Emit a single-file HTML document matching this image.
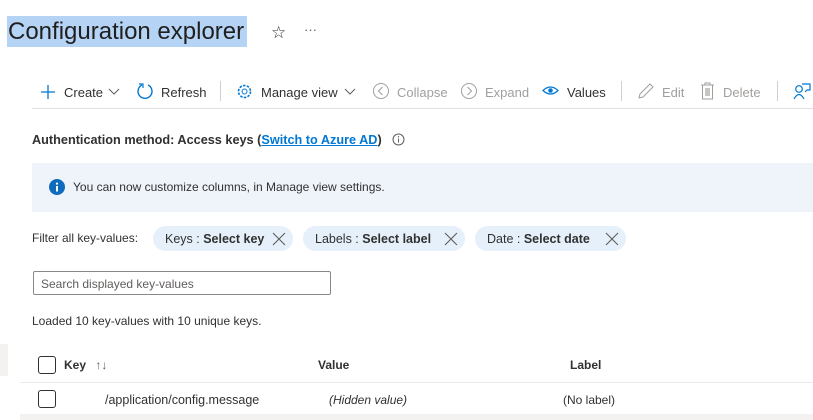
<!DOCTYPE html>
<html><head><style>
*{margin:0;padding:0;box-sizing:border-box}
body{width:813px;height:420px;overflow:hidden;background:#fff;font-family:"Liberation Sans",sans-serif;color:#323130;position:relative;font-size:13px}
.a{position:absolute;white-space:nowrap}
.tb{color:#323130;font-size:13px}
.dis{color:#a19f9d}
.chip{position:absolute;top:226px;height:25px;background:#e5f0fa;border-radius:13px;font-size:12.5px;line-height:26px;padding-left:12px}
.chip b{font-weight:bold}
.x{position:absolute;right:7px;top:6px}
.cb{position:absolute;width:18px;height:18px;border:1px solid #323130;border-radius:3px}
.sep{position:absolute;top:81px;width:1px;height:20px;background:#d2d0ce}
</style></head><body>
<div class="a" style="left:7px;top:16px;width:240px;height:31px;background:#b4d3f5"></div>
<div class="a" style="left:8px;top:17px;font-size:24px;color:#201f1e;line-height:30px">Configuration explorer</div>
<div class="a" style="left:271px;top:23px;font-size:17px;color:#323130">☆</div>
<div class="a" style="left:304px;top:22px;font-size:13px;color:#605e5c">···</div>

<svg class="a" style="left:40px;top:84px" width="16" height="16"><path d="M8 1v14M1 8h14" stroke="#0078d4" stroke-width="1.3"/></svg>
<div class="a tb" style="left:64px;top:85px">Create</div>
<svg class="a" style="left:108px;top:88px" width="12" height="8"><path d="M1 1l5 5 5-5" stroke="#605e5c" fill="none"/></svg>
<svg class="a" style="left:136px;top:82px" width="18" height="18"><path d="M6 3A7 7 0 1 0 12 3" stroke="#0078d4" stroke-width="1.4" fill="none"/><path d="M3 2h4v4" stroke="#0078d4" stroke-width="1.2" fill="none"/></svg>
<div class="a tb" style="left:161px;top:85px">Refresh</div>
<div class="sep" style="left:220px"></div>
<svg class="a" style="left:236px;top:83px" width="17" height="17"><circle cx="8.5" cy="8.5" r="6" stroke="#0078d4" stroke-width="1.6" fill="none" stroke-dasharray="2.5 1.3"/><circle cx="8.5" cy="8.5" r="2.5" stroke="#0078d4" fill="none"/></svg>
<div class="a tb" style="left:261px;top:85px">Manage view</div>
<svg class="a" style="left:344px;top:88px" width="12" height="8"><path d="M1 1l5 5 5-5" stroke="#605e5c" fill="none"/></svg>
<svg class="a" style="left:372px;top:82px" width="18" height="18"><circle cx="9" cy="9" r="7.5" stroke="#a19f9d" fill="none"/><path d="M10.5 5l-4 4 4 4" stroke="#a19f9d" fill="none"/></svg>
<div class="a tb dis" style="left:397px;top:85px">Collapse</div>
<svg class="a" style="left:460px;top:82px" width="18" height="18"><circle cx="9" cy="9" r="7.5" stroke="#a19f9d" fill="none"/><path d="M7.5 5l4 4-4 4" stroke="#a19f9d" fill="none"/></svg>
<div class="a tb dis" style="left:485px;top:85px">Expand</div>
<svg class="a" style="left:542px;top:85px" width="17" height="11"><path d="M1 5.5Q8.5-1.5 16 5.5Q8.5 12.5 1 5.5z" stroke="#0078d4" stroke-width="1.3" fill="none"/><circle cx="8.5" cy="5.5" r="2.3" fill="#0078d4"/></svg>
<div class="a tb" style="left:567px;top:85px">Values</div>
<div class="sep" style="left:621px"></div>
<svg class="a" style="left:637px;top:82px" width="18" height="18"><path d="M2 16l1-4L13 2l3 3L6 15z" stroke="#a19f9d" fill="none"/></svg>
<div class="a tb dis" style="left:662px;top:85px">Edit</div>
<svg class="a" style="left:700px;top:82px" width="15" height="18"><path d="M1 3h13M5 3V1h5v2M2.5 3v14h10V3" stroke="#a19f9d" fill="none"/><rect x="5" y="6" width="5" height="8" fill="#c8c6c4"/></svg>
<div class="a tb dis" style="left:723px;top:85px">Delete</div>
<div class="sep" style="left:777px"></div>
<svg class="a" style="left:793px;top:82px" width="20" height="18"><circle cx="6" cy="7" r="3.3" stroke="#0078d4" stroke-width="1.2" fill="none"/><path d="M1 17q5-9 10 0" stroke="#0078d4" stroke-width="1.2" fill="none"/><path d="M9 2h8v6h-3l-2 2" stroke="#0078d4" stroke-width="1.2" fill="none"/></svg>
<div class="a" style="left:32px;top:108px;width:781px;height:1px;background:#e1dfdd"></div>

<div class="a" style="left:32px;top:133px;font-weight:bold;font-size:12.7px;color:#323130">Authentication method: Access keys (<span style="color:#0078d4;text-decoration:underline">Switch to Azure AD</span>)</div>
<svg class="a" style="left:392px;top:133px" width="13" height="13"><circle cx="6.5" cy="6.5" r="5.5" stroke="#605e5c" fill="none"/><path d="M6.5 5.5v4" stroke="#605e5c"/><circle cx="6.5" cy="3.8" r=".7" fill="#605e5c"/></svg>

<div class="a" style="left:32px;top:163px;width:781px;height:49px;background:#eff4fb"></div>
<svg class="a" style="left:49px;top:179px" width="16" height="16"><circle cx="8" cy="8" r="8" fill="#0f6cbd"/><rect x="7" y="7" width="2" height="5.5" fill="#fff"/><circle cx="8" cy="4.6" r="1.1" fill="#fff"/></svg>
<div class="a" style="left:73px;top:180px;font-size:12px;color:#323130">You can now customize columns, in Manage view settings.</div>

<div class="a" style="left:32px;top:231px;font-size:12px">Filter all key-values:</div>
<div class="chip" style="left:153px;width:140px">Keys : <b>Select key</b><svg class="x" width="14" height="14"><path d="M1 1l12 12M13 1L1 13" stroke="#605e5c" stroke-width="1.1"/></svg></div>
<div class="chip" style="left:303px;width:162px">Labels : <b>Select label</b><svg class="x" width="14" height="14"><path d="M1 1l12 12M13 1L1 13" stroke="#605e5c" stroke-width="1.1"/></svg></div>
<div class="chip" style="left:475px;width:151px">Date : <b>Select date</b><svg class="x" width="14" height="14"><path d="M1 1l12 12M13 1L1 13" stroke="#605e5c" stroke-width="1.1"/></svg></div>

<div class="a" style="left:33px;top:271px;width:298px;height:24px;border:1px solid #8a8886;border-radius:2px"></div>
<div class="a" style="left:41px;top:277px;font-size:12px;color:#605e5c">Search displayed key-values</div>

<div class="a" style="left:32px;top:314px;font-size:12px">Loaded 10 key-values with 10 unique keys.</div>

<div class="a" style="left:0;top:344px;width:8px;height:32px;background:#f3f2f1"></div>
<div class="cb" style="left:38px;top:356px"></div>
<div class="a" style="left:64px;top:358px;font-size:12px;font-weight:bold">Key <span style="font-weight:normal;color:#605e5c;margin-left:6px">↑↓</span></div>
<div class="a" style="left:318px;top:358px;font-size:12px;font-weight:bold">Value</div>
<div class="a" style="left:570px;top:358px;font-size:12px;font-weight:bold">Label</div>
<div class="a" style="left:20px;top:382px;width:793px;height:1px;background:#edebe9"></div>
<div class="cb" style="left:38px;top:390px"></div>
<div class="a" style="left:105px;top:393px;font-size:12.5px">/application/config.message</div>
<div class="a" style="left:329px;top:393px;font-size:12px;font-style:italic">(Hidden value)</div>
<div class="a" style="left:563px;top:393px;font-size:12px">(No label)</div>
<div class="a" style="left:20px;top:414px;width:793px;height:6px;background:#f3f2f1"></div>
</body></html>
